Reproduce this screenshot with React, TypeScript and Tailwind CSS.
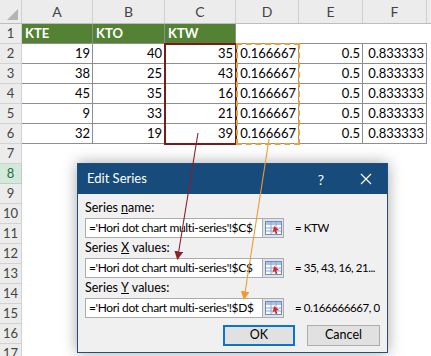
import type { FC } from 'react'

const colWidths = [71, 72, 71, 63, 64, 64]
const colNames = ['A', 'B', 'C', 'D', 'E', 'F']

const data: string[][] = [
  ['19', '40', '35', '0.166667', '0.5', '0.833333'],
  ['38', '25', '43', '0.166667', '0.5', '0.833333'],
  ['45', '35', '16', '0.166667', '0.5', '0.833333'],
  ['9', '33', '21', '0.166667', '0.5', '0.833333'],
  ['32', '19', '39', '0.166667', '0.5', '0.833333'],
]

const RowHead: FC<{ n: number; active?: boolean }> = ({ n, active }) => (
  <div
    className={
      active
        ? 'flex h-full w-[22px] shrink-0 items-center justify-center border-r border-b border-[#c8c8c8] bg-[#d3eadb] text-[#1f6f3f]'
        : 'flex h-full w-[22px] shrink-0 items-center justify-center border-r border-b border-[#d2d2d2] bg-[#ececec] text-[#444]'
    }
  >
    {n}
  </div>
)

// small range-picker icon used next to each reference box
const RefIcon: FC = () => (
  <svg width="17" height="14" viewBox="0 0 17 14">
    <rect x="0.5" y="0.5" width="16" height="13" fill="#fff" stroke="#6b8fc4" />
    <rect x="1" y="1" width="15" height="3" fill="#a9c3e8" />
    <line x1="1" y1="7" x2="16" y2="7" stroke="#8aa8d6" />
    <line x1="1" y1="10" x2="16" y2="10" stroke="#8aa8d6" />
    <line x1="6" y1="1" x2="6" y2="13" stroke="#8aa8d6" />
    <line x1="11" y1="1" x2="11" y2="13" stroke="#8aa8d6" />
    <path d="M9 5 L14 9 L11 9.5 L12.5 12.5 L11 13 L9.5 10 L7.5 12 Z" fill="#d9252a" />
  </svg>
)

const RefField: FC<{ value: string; result: string }> = ({ value, result }) => (
  <div className="flex h-[20px] items-center">
    <div className="flex h-full w-[178px] shrink-0 items-center overflow-hidden whitespace-nowrap border border-[#acacac] bg-white pl-[3px] text-[12px] tracking-[-0.35px] text-black">
      {value}
    </div>
    <div className="flex h-full w-[21px] shrink-0 items-center justify-center border border-l-0 border-[#acacac] bg-[#e3e3e3]">
      <RefIcon />
    </div>
    <div className="ml-[11px] overflow-hidden whitespace-nowrap text-[11.5px] tracking-[-0.4px] text-black">
      {result}
    </div>
  </div>
)

export default function App() {
  return (
    <div
      className="relative h-[356px] w-[431px] overflow-hidden bg-white"
      style={{ fontFamily: 'Lato, "Liberation Sans", sans-serif' }}
    >
      {/* sheet */}
      <div className="flex flex-col text-[13px]">
        {/* column headers */}
        <div className="flex h-[24px] border-b border-[#bdbdbd] bg-[#ececec] text-[14px] text-[#444]">
          <div className="relative w-[22px] shrink-0 border-r border-[#d0d0d0]">
            <svg className="absolute right-[3px] bottom-[3px]" width="11" height="11" viewBox="0 0 11 11">
              <polygon points="11,0 11,11 0,11" fill="#b4b4b4" />
            </svg>
          </div>
          {colNames.map((c, i) => (
            <div
              key={c}
              className="flex shrink-0 items-center justify-center border-r border-[#d0d0d0]"
              style={{ width: colWidths[i] }}
            >
              {c}
            </div>
          ))}
          <div className="flex-1" />
        </div>

        {/* row 1 */}
        <div className="flex h-[20px]">
          <RowHead n={1} />
          {['KTE', 'KTO', 'KTW'].map((t, i) => (
            <div
              key={t}
              className="flex shrink-0 items-center border-r border-b border-[#8e8e8e] bg-[#548235] pl-[3px] font-bold text-white"
              style={{ width: colWidths[i] }}
            >
              {t}
            </div>
          ))}
          <div className="w-[191px] shrink-0 border-b border-[#8e8e8e]" />
        </div>

        {/* rows 2-6 */}
        {data.map((row, r) => (
          <div key={r} className="flex h-[20px]">
            <RowHead n={r + 2} />
            {row.map((v, i) => (
              <div
                key={i}
                className="flex shrink-0 items-center justify-end border-r border-b border-[#8e8e8e] pr-[2px] text-black"
                style={{ width: colWidths[i] }}
              >
                {v}
              </div>
            ))}
          </div>
        ))}

        {/* rows 7-17 */}
        {Array.from({ length: 11 }, (_, i) => i + 7).map((n) => (
          <div key={n} className="flex h-[20px]">
            <RowHead n={n} active={n === 8} />
          </div>
        ))}
      </div>

      {/* selection outlines */}
      <div className="absolute top-[43px] left-[164px] h-[102px] w-[73px] border-2 border-[#7a1a1a]" />
      <div className="absolute top-[43px] left-[236px] h-[102px] w-[64px] border-2 border-dashed border-[#e9a23b]" />

      {/* dialog */}
      <div className="absolute top-[163px] left-[77px] flex h-[190px] w-[311px] flex-col border border-[#1f4f7d] bg-[#f0f0f0] shadow-[0_0_14px_rgba(0,0,0,0.35)]">
        <div className="flex h-[30px] shrink-0 items-center bg-[#164b7c] pl-[9px] text-white">
          <span className="text-[13px]">Edit Series</span>
          <span className="ml-auto text-[14px]">?</span>
          <span className="mr-[15px] ml-[36px] flex items-center">
            <svg width="12" height="12" viewBox="0 0 12 12">
              <path d="M1 1 L11 11 M11 1 L1 11" stroke="#fff" strokeWidth="1.2" />
            </svg>
          </span>
        </div>
        <div className="flex flex-col px-[7px] pt-[4px]">
          <div className="flex h-[20px] items-center text-[12.5px] text-black">
            Series&nbsp;<span className="underline">n</span>ame:
          </div>
          <RefField value="='Hori dot chart multi-series'!$C$" result="= KTW" />
          <div className="flex h-[20px] items-center text-[12.5px] text-black">
            Series&nbsp;<span className="underline">X</span>&nbsp;values:
          </div>
          <RefField value="='Hori dot chart multi-series'!$C$" result="= 35, 43, 16, 21..." />
          <div className="flex h-[20px] items-center text-[12.5px] text-black">
            Series&nbsp;<span className="underline">Y</span>&nbsp;values:
          </div>
          <RefField value="='Hori dot chart multi-series'!$D$" result="= 0.166666667, 0.." />
          <div className="mt-[7px] flex justify-end gap-[12px] text-[12.5px] text-black">
            <button className="flex h-[21px] w-[72px] items-center justify-center border-2 border-[#0a74d0] bg-[#e1e1e1]">
              OK
            </button>
            <button className="flex h-[21px] w-[73px] items-center justify-center border border-[#adadad] bg-[#e1e1e1]">
              Cancel
            </button>
          </div>
        </div>
      </div>

      {/* arrows */}
      <svg className="pointer-events-none absolute top-0 left-0" width="431" height="356" viewBox="0 0 431 356">
        <defs>
          <marker id="ar" markerWidth="8" markerHeight="8" refX="7" refY="4" orient="auto">
            <path d="M0 0 L8 4 L0 8 Z" fill="#8b1f2a" />
          </marker>
          <marker id="ao" markerWidth="8" markerHeight="8" refX="7" refY="4" orient="auto">
            <path d="M0 0 L8 4 L0 8 Z" fill="#ef9a2e" />
          </marker>
        </defs>
        <line x1="198" y1="133" x2="177.5" y2="259" stroke="#8b1f2a" strokeWidth="1.1" markerEnd="url(#ar)" />
        <line x1="269" y1="139" x2="244" y2="299" stroke="#ef9a2e" strokeWidth="1.1" markerEnd="url(#ao)" />
      </svg>
    </div>
  )
}
